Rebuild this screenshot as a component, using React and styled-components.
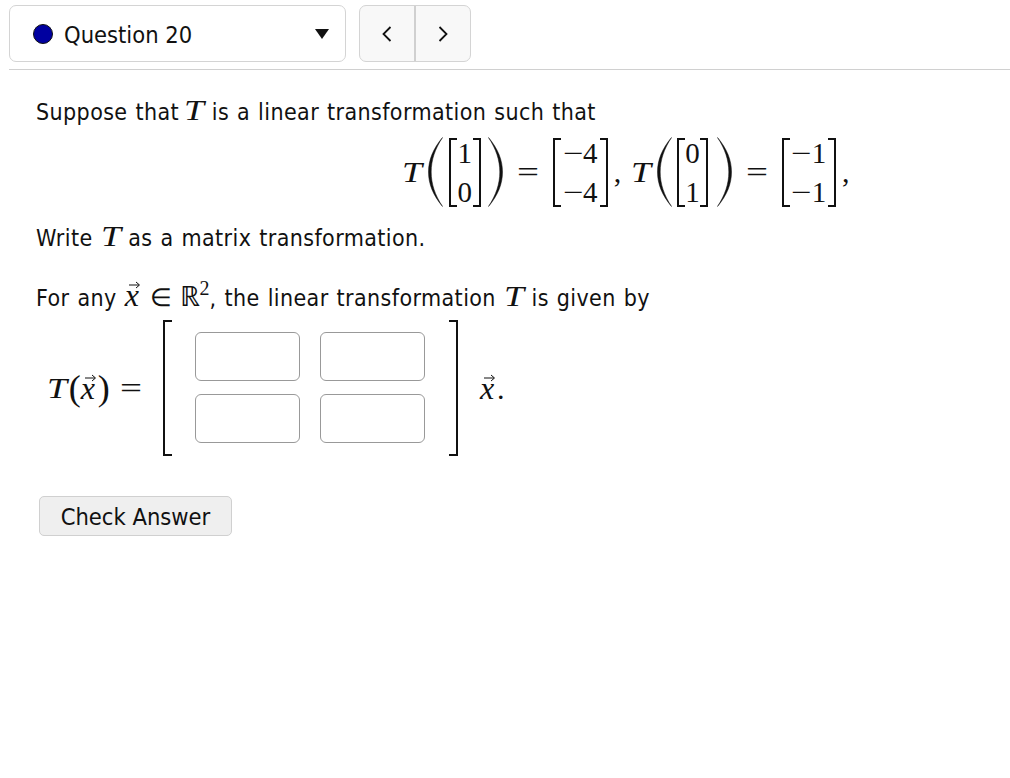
import React from "react";
import styled, { createGlobalStyle } from "styled-components";

const GlobalStyle = createGlobalStyle`
  html, body {
    margin: 0;
    background: #fff;
    color: #111;
    font-family: "DejaVu Sans Condensed", "DejaVu Sans", sans-serif;
    font-stretch: condensed;
    font-size: 23px;
  }
`;

const Page = styled.div`
  width: 1010px;
  height: 778px;
  overflow: hidden;
  padding: 5px 0 0 9px;
  box-sizing: border-box;
`;

const Toolbar = styled.div`
  display: flex;
  gap: 13px;
  height: 57px;
`;

const QuestionSelect = styled.div`
  width: 337px;
  box-sizing: border-box;
  border: 1px solid #d4d4d4;
  border-radius: 7px;
  display: flex;
  align-items: center;
  padding: 0 16px 0 23px;
`;

const StatusDot = styled.span`
  width: 20px;
  height: 20px;
  border-radius: 50%;
  background: #0000a0;
  border: 1px solid #111;
  box-sizing: border-box;
  margin-right: 11px;
`;

const SelectLabel = styled.span`
  flex: 1;
  font-size: 23.5px;
  padding-top: 2px;
`;

const NavGroup = styled.div`
  display: flex;
  width: 112px;
  box-sizing: border-box;
  border: 1px solid #d4d4d4;
  border-radius: 7px;
  background: #f8f8f8;
  overflow: hidden;
`;

const NavButton = styled.div`
  flex: 1;
  display: flex;
  align-items: center;
  justify-content: center;
  border-left: ${(props) => (props.$divided ? "2px solid #d0d0d0" : "none")};
`;

const Divider = styled.div`
  height: 1px;
  background: #d0d0d0;
  margin-top: 7px;
`;

const Content = styled.div`
  padding: 27px 0 0 27px;
`;

const TextLine = styled.div`
  height: 30px;
  line-height: 30px;
  white-space: pre;
  letter-spacing: 0.4px;
  word-spacing: 1px;
  margin-top: ${(props) => props.$top || 0}px;
`;

const MathVar = styled.span`
  display: inline-block;
  font-family: "Liberation Serif", serif;
  font-style: italic;
  font-size: 30px;
  line-height: 20px;
  letter-spacing: 0;
  color: #111;
  transform: scaleX(1.2);
  transform-origin: left;
  margin-left: ${(props) => props.$left || 0}px;
  margin-right: 3px;
`;

const MathText = styled.span`
  font-family: "Liberation Serif", serif;
  font-size: ${(props) => props.$size || 30}px;
  line-height: 20px;
  letter-spacing: 0;
  word-spacing: 0;
  margin-left: ${(props) => props.$left || 0}px;
`;

const DisplayMath = styled.div`
  display: flex;
  align-items: center;
  height: 72px;
  margin: 9px 0 15px 366px;
`;

const Matrix = styled.div`
  display: flex;
  align-items: stretch;
  height: 69px;
`;

const Bracket = styled.div`
  width: 8px;
  box-sizing: border-box;
  border: 2px solid #111;
  ${(props) => (props.$right ? "border-left: none;" : "border-right: none;")}
`;

const MatrixCells = styled.div`
  width: ${(props) => props.$width}px;
  display: flex;
  flex-direction: column;
  justify-content: space-between;
  align-items: center;
  font-family: "Liberation Serif", serif;
  font-size: 29px;
  line-height: 30px;
`;

const Minus = styled.span`
  display: inline-block;
  transform: scaleX(1.25);
  transform-origin: left;
  margin-right: 4px;
`;

const Spacer = styled.span`
  display: inline-block;
  flex: none;
  width: ${(props) => props.$width}px;
`;

const Equals = styled.span`
  display: inline-block;
  flex: none;
  font-family: "Liberation Serif", serif;
  font-size: 30px;
  line-height: 30px;
  width: 20px;
  text-align: center;
  transform: scaleX(1.3);
  margin: ${(props) => props.$margin || "0 15px 0 14px"};
`;

const AnswerRow = styled.div`
  display: flex;
  align-items: center;
  margin: 7px 0 0 11px;
  height: 136px;
`;

const AnswerLabel = styled.div`
  width: 116px;
  display: flex;
  align-items: center;
`;

const BigBracket = styled.div`
  width: 9px;
  height: 136px;
  box-sizing: border-box;
  border: 2px solid #111;
  ${(props) => (props.$right ? "border-left: none;" : "border-right: none;")}
`;

const AnswerGrid = styled.div`
  display: grid;
  grid-template-columns: 105px 105px;
  grid-auto-rows: 49px;
  column-gap: 20px;
  row-gap: 13px;
  padding: 0 24px 2px 23px;
`;

const AnswerInput = styled.input`
  box-sizing: border-box;
  width: 105px;
  height: 49px;
  border: 1px solid #999;
  border-radius: 6px;
  background: #fff;
  outline: none;
  padding: 0;
`;

const VectorTail = styled.div`
  margin-left: 22px;
  display: flex;
  align-items: baseline;
`;

const VectorVar = styled.span`
  position: relative;
  display: inline-block;
  width: 17px;
  font-family: "Liberation Serif", serif;
  font-style: italic;
  font-size: 32px;
  line-height: 20px;
  letter-spacing: 0;
`;

const VectorArrow = styled.svg`
  position: absolute;
  left: 3px;
  top: -5px;
  width: 13px;
  height: 9px;
`;

const Superscript = styled.span`
  font-family: "Liberation Serif", serif;
  font-size: 20px;
  line-height: 0;
  letter-spacing: 0;
  position: relative;
  top: -11px;
`;

const CheckButton = styled.button`
  display: block;
  margin: 40px 0 0 3px;
  width: 193px;
  height: 40px;
  box-sizing: border-box;
  border: 1px solid #d0d0d0;
  border-radius: 5px;
  background: #efefef;
  color: #111;
  font: inherit;
  font-size: 23.5px;
  font-stretch: condensed;
  padding: 2px 0 0;
`;

const Paren = ({ right }) => (
  <svg width="16" height="70" viewBox="0 0 16 70" style={{ flex: "none", transform: right ? "scaleX(-1)" : "none" }}>
    <path d="M15.5 0.5 C6 12 1.5 23 1.5 35 C1.5 47 6 58 15.5 69.5 C8 58 4.2 47 4.2 35 C4.2 23 8 12 15.5 0.5 Z" fill="#111" stroke="#111" strokeWidth="0.5" />
  </svg>
);

const Chevron = ({ right }) => (
  <svg width="12" height="18" viewBox="0 0 12 18">
    <path d={right ? "M2.5 2 L9.5 9 L2.5 16" : "M9.5 2 L2.5 9 L9.5 16"} fill="none" stroke="#111" strokeWidth="1.8" />
  </svg>
);

const Vector = () => (
  <VectorVar>
    x
    <VectorArrow viewBox="0 0 13 9">
      <path d="M1 5 H11 M8 2 L11.5 5 L8 8" fill="none" stroke="#111" strokeWidth="1" />
    </VectorArrow>
  </VectorVar>
);

const Entry = ({ value }) =>
  value < 0 ? (
    <span>
      <Minus>−</Minus>
      {-value}
    </span>
  ) : (
    <span>{value}</span>
  );

const MatrixBlock = ({ top, bottom, width }) => (
  <Matrix>
    <Bracket />
    <MatrixCells $width={width}>
      <Entry value={top} />
      <Entry value={bottom} />
    </MatrixCells>
    <Bracket $right />
  </Matrix>
);

export default function App() {
  return (
    <Page>
      <GlobalStyle />
      <Toolbar>
        <QuestionSelect>
          <StatusDot />
          <SelectLabel>Question 20</SelectLabel>
          <svg width="14" height="10" viewBox="0 0 14 10">
            <path d="M0 0 H14 L7 10 Z" fill="#111" />
          </svg>
        </QuestionSelect>
        <NavGroup>
          <NavButton>
            <Chevron />
          </NavButton>
          <NavButton $divided>
            <Chevron right />
          </NavButton>
        </NavGroup>
      </Toolbar>
      <Divider />
      <Content>
        <TextLine>
          Suppose that
          <MathVar $left={5}>T</MathVar> is a linear transformation such that
        </TextLine>
        <DisplayMath>
          <MathVar>T</MathVar>
          <Spacer $width={5} />
          <Paren />
          <Spacer $width={6} />
          <MatrixBlock top={1} bottom={0} width={16} />
          <Spacer $width={7} />
          <Paren right />
          <Equals>=</Equals>
          <MatrixBlock top={-4} bottom={-4} width={39} />
          <MathText $left={6}>,</MathText>
          <Spacer $width={10} />
          <MathVar>T</MathVar>
          <Spacer $width={5} />
          <Paren />
          <Spacer $width={5} />
          <MatrixBlock top={0} bottom={1} width={15} />
          <Spacer $width={9} />
          <Paren right />
          <Equals>=</Equals>
          <MatrixBlock top={-1} bottom={-1} width={38} />
          <MathText $left={6}>,</MathText>
        </DisplayMath>
        <TextLine>
          Write <MathVar>T</MathVar> as a matrix transformation.
        </TextLine>
        <TextLine $top={30}>
          For any <Vector /> <MathText $size={25}>∈</MathText> <MathText $size={28}>ℝ</MathText>
          <Superscript>2</Superscript>, the linear transformation <MathVar>T</MathVar> is given by
        </TextLine>
        <AnswerRow>
          <AnswerLabel>
            <MathVar>T</MathVar>
            <Spacer $width={2} />
            <MathText $size={36}>(</MathText>
            <Vector />
            <MathText $size={36}>)</MathText>
            <Equals $margin="0 0 0 11px">=</Equals>
          </AnswerLabel>
          <BigBracket />
          <AnswerGrid>
            <AnswerInput />
            <AnswerInput />
            <AnswerInput />
            <AnswerInput />
          </AnswerGrid>
          <BigBracket $right />
          <VectorTail>
            <Vector />
            <MathText>.</MathText>
          </VectorTail>
        </AnswerRow>
        <CheckButton>Check Answer</CheckButton>
      </Content>
    </Page>
  );
}
